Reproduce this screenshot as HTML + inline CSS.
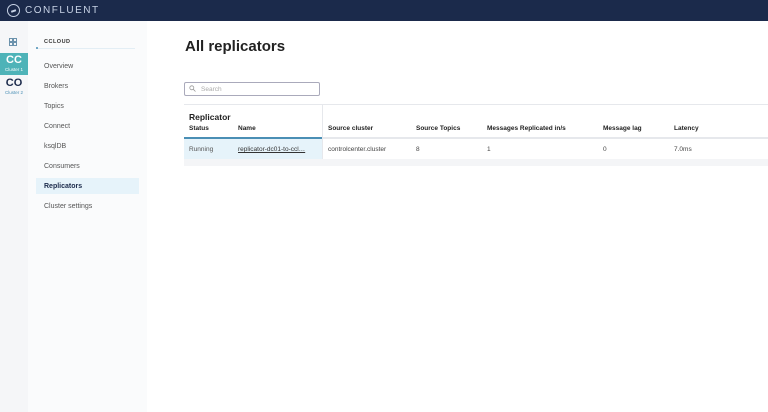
<!DOCTYPE html>
<html><head><style>
*{margin:0;padding:0;box-sizing:border-box}
body{width:768px;height:412px;overflow:hidden;font-family:"Liberation Sans",sans-serif;background:#fff;position:relative;color:#333}
.hdr{position:absolute;left:0;top:0;width:768px;height:21px;background:#1b2a4b}
.logo{position:absolute;left:7px;top:4px;width:13px;height:13px;border:1.3px solid #c8d3e6;border-radius:50%}
.logo:after{content:"";position:absolute;left:3px;top:5px;width:5px;height:1.5px;background:#c8d3e6;transform:rotate(-20deg)}
.brand{position:absolute;left:25px;top:5px;font-size:10px;letter-spacing:1.5px;color:#c8d3e6}
.rail{position:absolute;left:0;top:21px;width:28px;height:391px;background:#f5f6f8}
.side{position:absolute;left:28px;top:21px;width:119px;height:391px;background:#fafbfc}
.cc{position:absolute;left:0;top:53px;width:28px;height:22px;background:#4eb3b8;color:#fff;text-align:center}
.big{font-size:11px;font-weight:bold;line-height:12px;margin-top:1px}
.sm{font-size:4.5px;line-height:7px}
.co{position:absolute;left:0;top:76px;width:28px;text-align:center;color:#1b2a4b}
.co .sm{color:#4a8fb5}
.grid{position:absolute;left:9px;top:38px;width:8px;height:8px}
.nav{position:absolute;left:44px;font-size:7px;color:#555}
.ccl{position:absolute;left:44px;top:39px;font-size:5.5px;font-weight:bold;letter-spacing:.5px;color:#333}
.line{position:absolute;left:36px;top:48px;width:99px;height:1px;background:#e3eef5}
.dot{position:absolute;left:36px;top:47px;width:2px;height:2px;background:#4a8fb5;border-radius:50%}
.act{position:absolute;left:36px;top:178px;width:103px;height:16px;background:#e6f3fa}
h1{position:absolute;left:185px;top:38px;font-size:15px;font-weight:bold;color:#222}
.srch{position:absolute;left:184px;top:82px;width:136px;height:14px;border:1px solid #aab;border-radius:2px;font-size:6.5px;color:#aaa;padding:3px 0 0 16px}
.t{position:absolute;font-size:6.5px;color:#222}
.h{font-weight:bold}
</style></head><body>
<div class="hdr"><div class="logo"></div><div class="brand">CONFLUENT</div></div>
<div class="rail"></div><div class="side"></div>
<svg class="grid" viewBox="0 0 8 8"><g fill="none" stroke="#4a7a9a" stroke-width=".8"><rect x=".5" y=".5" width="3" height="3"/><rect x="4.5" y=".5" width="3" height="3"/><rect x=".5" y="4.5" width="3" height="3"/><rect x="4.5" y="4.5" width="3" height="3"/></g></svg>
<div class="cc"><div class="big">CC</div><div class="sm">Cluster 1</div></div>
<div class="co"><div class="big">CO</div><div class="sm">Cluster 2</div></div>
<div class="ccl">CCLOUD</div><div class="line"></div><div class="dot"></div>
<div class="act"></div>
<div class="nav" style="top:63px">Overview</div>
<div class="nav" style="top:83px">Brokers</div>
<div class="nav" style="top:103px">Topics</div>
<div class="nav" style="top:123px">Connect</div>
<div class="nav" style="top:143px">ksqlDB</div>
<div class="nav" style="top:163px">Consumers</div>
<div class="nav" style="top:183px;color:#1b2a4b;font-weight:bold">Replicators</div>
<div class="nav" style="top:203px">Cluster settings</div>
<h1>All replicators</h1>
<div class="srch">Search</div>
<svg style="position:absolute;left:189px;top:85px" width="7" height="7" viewBox="0 0 7 7"><circle cx="2.8" cy="2.8" r="2" fill="none" stroke="#999" stroke-width=".8"/><path d="M4.3 4.3L6.5 6.5" stroke="#999" stroke-width=".8"/></svg>
<div style="position:absolute;left:184px;top:104px;width:584px;height:1px;background:#e6e8ec"></div>
<div style="position:absolute;left:322px;top:104px;width:1px;height:62px;background:#e6e8ec"></div>
<div style="position:absolute;left:184px;top:137px;width:138px;height:2px;background:#4a8fb5"></div>
<div style="position:absolute;left:323px;top:137px;width:445px;height:2px;background:#e6e8ec"></div>
<div style="position:absolute;left:184px;top:139px;width:138px;height:20px;background:#e6f3fa"></div>
<div style="position:absolute;left:184px;top:159px;width:584px;height:7px;background:#f4f5f7"></div>
<div class="t h" style="left:189px;top:112px;font-size:8.5px">Replicator</div>
<div class="t h" style="left:189px;top:125px">Status</div>
<div class="t h" style="left:238px;top:125px">Name</div>
<div class="t h" style="left:328px;top:125px">Source cluster</div>
<div class="t h" style="left:416px;top:125px">Source Topics</div>
<div class="t h" style="left:487px;top:125px">Messages Replicated in/s</div>
<div class="t h" style="left:603px;top:125px">Message lag</div>
<div class="t h" style="left:674px;top:125px">Latency</div>
<div class="t" style="left:189px;top:146px;color:#555">Running</div>
<div class="t" style="left:238px;top:146px;text-decoration:underline;color:#333">replicator-dc01-to-ccl…</div>
<div class="t" style="left:328px;top:146px;color:#444">controlcenter.cluster</div>
<div class="t" style="left:416px;top:146px;color:#444">8</div>
<div class="t" style="left:487px;top:146px;color:#444">1</div>
<div class="t" style="left:603px;top:146px;color:#444">0</div>
<div class="t" style="left:674px;top:146px;color:#444">7.0ms</div>
</body></html>
